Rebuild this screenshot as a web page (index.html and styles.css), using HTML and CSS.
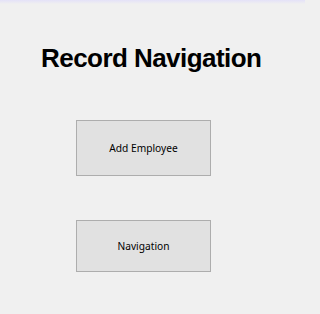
FILE: index.html
```html
<!DOCTYPE html>
<html>
<head>
<meta charset="utf-8">
<link rel="stylesheet" href="styles.css">
</head>
<body>
<div class="window">
  <div class="topline"></div>
  <h1 class="title">Record Navigation</h1>
  <div class="buttons">
    <button class="btn btn-add">Add Employee</button>
    <button class="btn btn-nav">Navigation</button>
  </div>
</div>
</body>
</html>
```
FILE: styles.css
```css
html, body {
  margin: 0;
  padding: 0;
  background: #f0f0f0;
}
.window {
  width: 305px;
  height: 314px;
  display: flex;
  flex-direction: column;
  background: #f0f0f0;
  overflow: hidden;
}
.topline {
  height: 4px;
  background: linear-gradient(#e4e2f8, #f0f0f0);
}
.title {
  margin: 39px 0 0 0;
  padding-left: 41px;
  font-family: "Liberation Sans", Arial, sans-serif;
  font-weight: bold;
  font-size: 26px;
  letter-spacing: -0.55px;
  line-height: 30px;
  color: #000;
}
.buttons {
  display: flex;
  flex-direction: column;
  padding-left: 76px;
  margin-top: 47px;
  gap: 44px;
}
.btn {
  box-sizing: border-box;
  width: 135px;
  background: #e1e1e1;
  border: 1px solid #adadad;
  font-family: "Noto Sans", "Open Sans", sans-serif;
  font-size: 10.2px;
  color: #000;
  padding: 0;
}
.btn-add { height: 56px; }
.btn-nav { height: 52px; }
```
